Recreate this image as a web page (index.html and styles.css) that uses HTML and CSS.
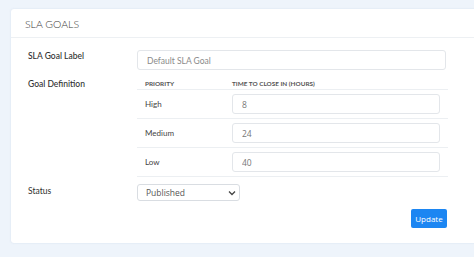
FILE: index.html
```html
<!DOCTYPE html>
<html lang="en">
<head>
<meta charset="UTF-8">
<title>SLA Goals</title>
<link rel="stylesheet" href="styles.css">
</head>
<body>

<div class="card">
  <div class="card-header">SLA GOALS</div>
  <div class="card-body">
    <div class="form-row">
      <label class="form-label">SLA Goal Label</label>
      <input class="input-box wide" type="text" placeholder="Default SLA Goal">
    </div>

    <div class="form-row">
      <label class="form-label">Goal Definition</label>
      <table class="goals">
        <thead>
          <tr><th class="col-priority">Priority</th><th>Time to close in (hours)</th></tr>
        </thead>
        <tbody>
          <tr><td>High</td><td><input class="input-box" type="text" value="8"></td></tr>
          <tr><td>Medium</td><td><input class="input-box" type="text" value="24"></td></tr>
          <tr><td>Low</td><td><input class="input-box" type="text" value="40"></td></tr>
        </tbody>
      </table>
    </div>

    <div class="form-row status-row">
      <label class="form-label">Status</label>
      <div class="select-box">
        <span>Published</span>
        <svg width="8" height="6" viewBox="0 0 8 6"><path d="M1 1.5 L4 4.5 L7 1.5" fill="none" stroke="#444" stroke-width="1.3"/></svg>
      </div>
    </div>

    <div class="actions">
      <button class="btn-update">Update</button>
    </div>
  </div>
</div>

</body>
</html>
```

FILE: styles.css
```css
body { margin: 0; background-color: #eef4fb; font-family: Lato, "Open Sans", sans-serif; color: #333; height: 257px; overflow: hidden; }
.card { margin: 9px 0 0 11px; width: 480px; height: 234px; background: #fff; border-radius: 3px; box-shadow: 0 0 2px rgba(160, 180, 210, 0.35); }
.card-header { height: 28px; line-height: 30px; padding-left: 14px; font-size: 10.5px; font-weight: 300; color: #3a3a3a; border-bottom: 1px solid #edf0f3; }
.card-body { padding: 12px 0 0 17px; }

.form-row { display: flex; align-items: flex-start; margin-bottom: 8px; }
.form-label { width: 109px; flex: none; font-size: 8.5px; line-height: 12px; font-weight: 500; color: #2f2f2f; }

.input-box {
  box-sizing: border-box;
  height: 20px;
  width: 208px;
  border: 1px solid #e3e6ea;
  border-radius: 3px;
  padding: 0 9px;
  font-family: "Open Sans", sans-serif;
  font-size: 8.5px;
  color: #777;
  background: #fff;
  outline: none;
}
.input-box.wide { width: 309px; }
.input-box::placeholder { color: #8a8a8a; font-family: Lato, sans-serif; font-size: 8.5px; }

.goals { width: 311px; border-collapse: collapse; font-size: 8px; }
.goals th { text-align: left; text-transform: uppercase; font-size: 6.4px; font-weight: 700; color: #555; line-height: 11px; padding: 0 8px; border-bottom: 1px solid #eceff2; }
.goals th.col-priority { width: 71px; }
.goals td { padding: 4px 8px; border-bottom: 1px solid #eceff2; color: #444; line-height: 20px; }
.goals td .input-box { display: block; }

.status-row { margin-top: -1px; margin-bottom: 8px; }
.status-row .form-label { line-height: 14px; font-weight: 400; }
.select-box {
  box-sizing: border-box;
  width: 103px;
  height: 17px;
  border: 1px solid #d9dde2;
  border-radius: 3px;
  display: flex;
  align-items: center;
  justify-content: space-between;
  padding: 0 3px 0 8px;
  font-family: "Open Sans", sans-serif;
  font-size: 8.5px;
  color: #555;
}

.actions { display: flex; justify-content: flex-end; width: 419px; }
.btn-update { height: 19px; width: 36px; padding: 0; border: none; border-radius: 2px; background: #1c86f2; color: #fff; font-family: "Open Sans", sans-serif; font-size: 8px; }
```
